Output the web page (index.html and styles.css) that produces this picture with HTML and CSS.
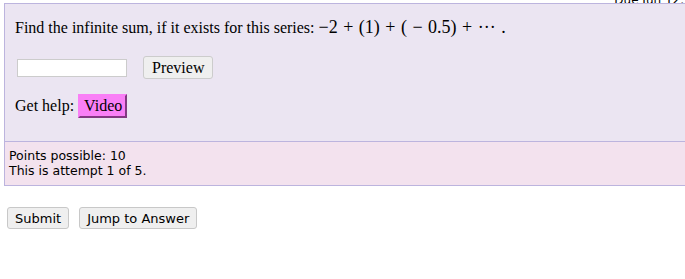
FILE: index.html
```html
<!DOCTYPE html>
<html lang="en">
<head>
    <meta charset="UTF-8">
    <title>Question</title>
    <link rel="stylesheet" href="styles.css">
</head>
<body>
    <div class="page">
        <div class="due">Due Jun 12.</div>

        <div class="question">
            <p class="prompt">Find the infinite sum, if it exists for this series: <span class="math">&minus;2 + (1) + ( &minus; 0.5) + &middot;&middot;&middot; .</span></p>

            <div class="answer">
                <input type="text" class="answer-box">
                <button class="preview">Preview</button>
            </div>

            <div class="help">
                Get help: <span class="video">Video</span>
            </div>
        </div>

        <div class="info">
            Points possible: 10<br>
            This is attempt 1 of 5.
        </div>

        <div class="actions">
            <button class="btn">Submit</button>
            <button class="btn">Jump to Answer</button>
        </div>
    </div>
</body>
</html>
```

FILE: styles.css
```css
body {
    margin: 0;
    background: #fff;
    font-family: "Liberation Serif", "Times New Roman", serif;
    color: #000;
    overflow: hidden;
}

.page {
    width: 720px;
    padding-left: 4px;
}

.due {
    height: 3px;
    overflow: hidden;
    text-align: right;
    padding-right: 40px;
    font-family: "DejaVu Sans", sans-serif;
    font-size: 12px;
    line-height: 0;
}

.question {
    background: #ebe5f2;
    border: 1px solid #bcb4de;
    border-bottom: none;
    height: 137px;
    padding: 0 10px;
}

.prompt {
    margin: 13px 0 0;
    font-size: 16px;
    line-height: 20px;
}

.math {
    font-family: "Liberation Serif", serif;
    font-size: 18px;
    word-spacing: 1px;
}

.answer {
    display: flex;
    align-items: center;
    gap: 16px;
    margin-top: 18px;
    padding-left: 2px;
}

.answer-box {
    width: 106px;
    height: 14px;
    margin: 0;
    padding: 1px;
    border: 1px solid #ccc;
    background: #fff;
}

.preview {
    font-family: "Liberation Serif", serif;
    font-size: 16px;
    height: 23px;
    padding: 0 8px;
    border: 1px solid #ccc;
    border-radius: 3px;
    background: #efefef;
    color: #000;
}

.help {
    margin-top: 15px;
    font-size: 16px;
    display: flex;
    align-items: center;
    gap: 4px;
}

.video {
    display: inline-block;
    background: #f97ff6;
    border: 2px outset #d65fd4;
    border-top-color: #f97ff6;
    border-left-color: #f97ff6;
    padding: 1px 3px 1px 4px;
    line-height: 18px;
}

.info {
    background: #f3e2ee;
    border: 1px solid #bcb4de;
    height: 45px;
    padding: 6px 4px 0;
    box-sizing: border-box;
    font-family: "DejaVu Sans", sans-serif;
    font-size: 12.5px;
    line-height: 15px;
}

.actions {
    display: flex;
    gap: 10px;
    margin-top: 21px;
    padding-left: 3px;
}

.btn {
    font-family: "DejaVu Sans", sans-serif;
    font-size: 13px;
    height: 22px;
    padding: 0 7px;
    border: 1px solid #c8c8c8;
    border-radius: 3px;
    background: #efefef;
    color: #000;
}
```
